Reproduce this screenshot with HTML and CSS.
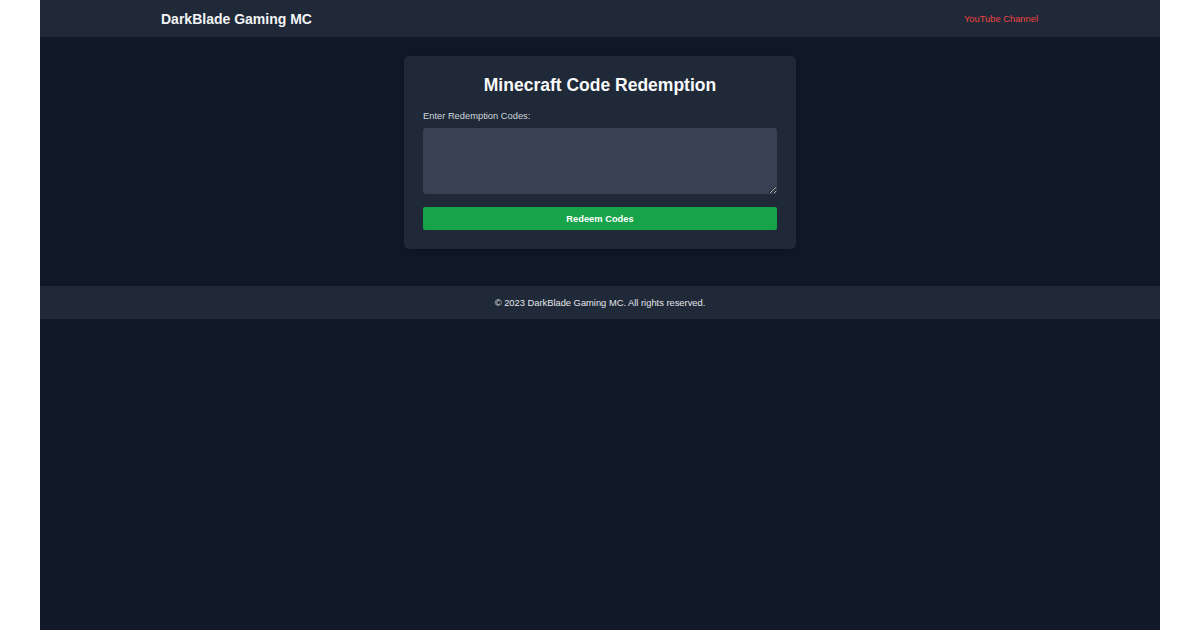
FILE: index.html
```html
<!DOCTYPE html>
<html lang="en">
<head>
<meta charset="utf-8">
<title>DarkBlade Gaming MC</title>
<link rel="stylesheet" href="styles.css">
</head>
<body>
<div class="page">
  <header class="header">
    <div class="header-inner">
      <span class="brand">DarkBlade Gaming MC</span>
      <a class="yt-link" href="#">YouTube Channel</a>
    </div>
  </header>
  <main class="main">
    <div class="card">
      <h1 class="card-title">Minecraft Code Redemption</h1>
      <label class="label" for="codes">Enter Redemption Codes:</label>
      <textarea id="codes" class="codes"></textarea>
      <button class="redeem" type="button">Redeem Codes</button>
    </div>
  </main>
  <footer class="footer">© 2023 DarkBlade Gaming MC. All rights reserved.</footer>
</div>
</body>
</html>
```

FILE: styles.css
```css
* { box-sizing: border-box; }
html, body { margin: 0; padding: 0; }
body {
  background: #ffffff;
  font-family: "Liberation Sans", Arial, sans-serif;
}
.page {
  width: 1120px;
  margin: 0 auto;
  min-height: 100vh;
  background: #111827;
  display: flex;
  flex-direction: column;
}
.header {
  background: #1f2937;
  height: 37px;
}
.header-inner {
  width: 878px;
  margin: 0 auto;
  height: 100%;
  display: flex;
  align-items: center;
  justify-content: space-between;
}
.brand {
  color: #f3f4f6;
  font-weight: bold;
  font-size: 14px;
}
.yt-link {
  color: #ef4444;
  font-size: 9.33px;
  text-decoration: none;
  margin-top: 1px;
  margin-right: 1px;
}
.main {
  padding: 19px 0 37px;
  display: flex;
  justify-content: center;
}
.card {
  width: 392px;
  background: #1f2937;
  border-radius: 5px;
  padding: 19px;
  box-shadow: 0 3px 8px rgba(0, 0, 0, 0.25);
  display: flex;
  flex-direction: column;
}
.card-title {
  margin: 0 0 16px;
  text-align: center;
  color: #f9fafb;
  font-size: 17.5px;
  line-height: 20px;
  font-weight: bold;
}
.label {
  display: block;
  color: #d1d5db;
  font-size: 9.33px;
  line-height: 11px;
  margin-bottom: 6px;
}
.codes {
  display: block;
  width: 100%;
  height: 66px;
  background: #374151;
  border: none;
  border-radius: 3px;
  color: #f3f4f6;
  resize: vertical;
  font-family: inherit;
  font-size: 9.33px;
  padding: 6px;
  outline: none;
}
.redeem {
  margin-top: 13px;
  height: 23px;
  width: 100%;
  border: none;
  border-radius: 2px;
  background: #16a34a;
  color: #ffffff;
  font-family: inherit;
  font-weight: bold;
  font-size: 9.33px;
  cursor: pointer;
}
.footer {
  background: #1f2937;
  height: 33px;
  display: flex;
  align-items: center;
  justify-content: center;
  color: #e5e7eb;
  font-size: 9.33px;
}
```
